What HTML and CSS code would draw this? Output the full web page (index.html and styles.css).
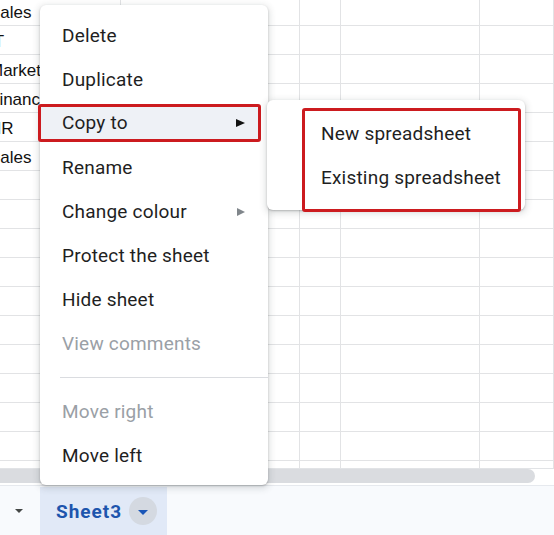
FILE: index.html
```html
<!doctype html>
<html lang="en">
  <head>
    <meta charset="UTF-8" />
    <title>Sheet tab menu</title>
    <link rel="stylesheet" href="styles.css">
  </head>
  <body>
    <div class="sheet">
      <div class="grid">
        <div class="row"><div class="cell">Sales</div><div class="cell"></div><div class="cell"></div><div class="cell"></div><div class="cell"></div></div>
        <div class="row"><div class="cell">IT</div><div class="cell"></div><div class="cell"></div><div class="cell"></div><div class="cell"></div></div>
        <div class="row"><div class="cell">Marketing</div><div class="cell"></div><div class="cell"></div><div class="cell"></div><div class="cell"></div></div>
        <div class="row"><div class="cell">Finance</div><div class="cell"></div><div class="cell"></div><div class="cell"></div><div class="cell"></div></div>
        <div class="row"><div class="cell">HR</div><div class="cell"></div><div class="cell"></div><div class="cell"></div><div class="cell"></div></div>
        <div class="row"><div class="cell">Sales</div><div class="cell"></div><div class="cell"></div><div class="cell"></div><div class="cell"></div></div>
        <div class="row"><div class="cell"></div><div class="cell"></div><div class="cell"></div><div class="cell"></div><div class="cell"></div></div>
        <div class="row"><div class="cell"></div><div class="cell"></div><div class="cell"></div><div class="cell"></div><div class="cell"></div></div>
        <div class="row"><div class="cell"></div><div class="cell"></div><div class="cell"></div><div class="cell"></div><div class="cell"></div></div>
        <div class="row"><div class="cell"></div><div class="cell"></div><div class="cell"></div><div class="cell"></div><div class="cell"></div></div>
        <div class="row"><div class="cell"></div><div class="cell"></div><div class="cell"></div><div class="cell"></div><div class="cell"></div></div>
        <div class="row"><div class="cell"></div><div class="cell"></div><div class="cell"></div><div class="cell"></div><div class="cell"></div></div>
        <div class="row"><div class="cell"></div><div class="cell"></div><div class="cell"></div><div class="cell"></div><div class="cell"></div></div>
        <div class="row"><div class="cell"></div><div class="cell"></div><div class="cell"></div><div class="cell"></div><div class="cell"></div></div>
        <div class="row"><div class="cell"></div><div class="cell"></div><div class="cell"></div><div class="cell"></div><div class="cell"></div></div>
        <div class="row"><div class="cell"></div><div class="cell"></div><div class="cell"></div><div class="cell"></div><div class="cell"></div></div>
        <div class="row"><div class="cell"></div><div class="cell"></div><div class="cell"></div><div class="cell"></div><div class="cell"></div></div>
      </div>
    </div>

    <div class="hscroll"><div class="thumb"></div></div>

    <div class="tabbar">
      <div class="all-sheets"><span class="caret"></span></div>
      <div class="tab">
        <span class="tab-name">Sheet3</span>
        <span class="tab-drop"><span class="caret blue"></span></span>
      </div>
    </div>

    <!-- sheet tab context menu -->
    <div class="menu">
      <div class="item">Delete</div>
      <div class="item">Duplicate</div>
      <div class="item active">Copy to <span class="arrow"></span></div>
      <div class="item">Rename</div>
      <div class="item">Change colour <span class="arrow grey"></span></div>
      <div class="item">Protect the sheet</div>
      <div class="item">Hide sheet</div>
      <div class="item disabled">View comments</div>
      <div class="separator"></div>
      <div class="item disabled">Move right</div>
      <div class="item">Move left</div>
    </div>

    <div class="submenu">
      <div class="highlight">
        <div class="item">New spreadsheet</div>
        <div class="item">Existing spreadsheet</div>
      </div>
    </div>
  </body>
</html>
```

FILE: styles.css
```css
* {
  margin: 0;
  padding: 0;
  box-sizing: border-box;
}

body {
  font-family: Roboto, 'Liberation Sans', Arial, sans-serif;
  color: #1f1f1f;
  background: #fff;
  width: 554px;
  height: 535px;
  overflow: hidden;
  position: relative;
}

/* grid */
.sheet {
  height: 469px;
  overflow: hidden;
  border-bottom: 1px solid #e1e3e6;
}

.grid {
  margin-top: -3px;
  margin-left: -15px;
}

.row {
  display: grid;
  grid-template-columns: 136px 179px 41px 139px 1fr;
  height: 29px;
  border-bottom: 1px solid #e2e3e5;
}

.cell {
  border-right: 1px solid #e2e3e5;
  padding: 3px 0 0 4px;
  font-family: 'Liberation Sans', Arial, sans-serif;
  font-size: 17px;
  line-height: 25px;
  color: #111;
  white-space: nowrap;
  overflow: hidden;
}

/* horizontal scroll */
.hscroll {
  height: 17px;
  border-bottom: 1px solid #e6e9ee;
}

.thumb {
  margin-left: -10px;
  width: 545px;
  height: 14px;
  border-radius: 7px;
  background: #dadce0;
}

/* bottom tab bar */
.tabbar {
  display: flex;
  height: 49px;
  padding-top: 1px;
  background: #f8fafd;
}

.all-sheets {
  width: 40px;
  display: flex;
  align-items: center;
  justify-content: center;
  padding-right: 3px;
}

.caret {
  width: 0;
  height: 0;
  border-left: 4px solid transparent;
  border-right: 4px solid transparent;
  border-top: 4px solid #444746;
}

.caret.blue {
  border-left-width: 5px;
  border-right-width: 5px;
  border-top: 5px solid #1a56b8;
}

.tab {
  width: 127px;
  display: flex;
  align-items: center;
  padding-left: 16px;
  background: #e1e9f7;
}

.tab-name {
  font-size: 19px;
  font-weight: 700;
  letter-spacing: 1px;
  color: #1d55ad;
}

.tab-drop {
  width: 28px;
  height: 28px;
  margin-left: 7px;
  border-radius: 50%;
  background: #d4d9e1;
  display: flex;
  align-items: center;
  justify-content: center;
  padding-top: 2px;
}

/* menus */
.menu,
.submenu {
  position: absolute;
  background: #fff;
  border-radius: 6px;
  box-shadow: 0 2px 6px 2px rgba(60, 64, 67, 0.15),
    0 1px 2px rgba(60, 64, 67, 0.3);
}

.menu {
  left: 40px;
  top: 5px;
  width: 228px;
  padding: 9px 0 7px;
}

.item {
  height: 44px;
  line-height: 44px;
  padding: 0 23px 0 22px;
  display: flex;
  align-items: center;
  justify-content: space-between;
  font-size: 19px;
  letter-spacing: 0.2px;
  white-space: nowrap;
}

.item.disabled {
  color: #9aa0a6;
}

.item.active {
  height: 38px;
  line-height: 32px;
  margin: 2px 7px 4px -2px;
  padding: 0 13px 0 21px;
  border: 3px solid #cc1b1f;
  border-radius: 3px;
  background: #eef1f6;
}

.arrow {
  width: 0;
  height: 0;
  border-top: 4px solid transparent;
  border-bottom: 4px solid transparent;
  border-left: 9px solid #111;
}

.arrow.grey {
  border-left: 8px solid #80868b;
}

.separator {
  height: 1px;
  margin: 11px 0 12px 20px;
  background: #dadce0;
}

.submenu {
  left: 267px;
  top: 100px;
  width: 258px;
  height: 110px;
  padding: 8px 4px 0 35px;
  z-index: 2;
}

.highlight {
  height: 104px;
  padding-top: 1px;
  border: 3px solid #cc1b1f;
  border-radius: 3px;
}

.submenu .item {
  padding-left: 16px;
}
```
